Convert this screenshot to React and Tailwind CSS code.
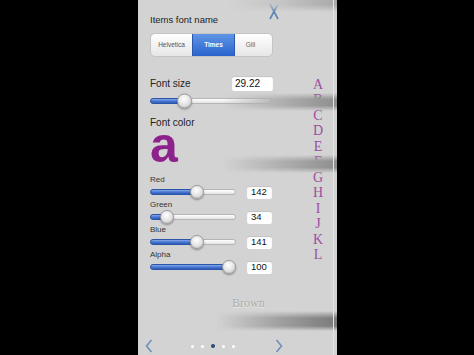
import React from 'react';

const SANS = "font-['Liberation_Sans',Arial,sans-serif]";

const colors = [
  { name: 'Red', value: 142 },
  { name: 'Green', value: 34 },
  { name: 'Blue', value: 141 },
  { name: 'Alpha', value: 100, max: 100 },
];

const letters = ['A', 'B', 'C', 'D', 'E', 'F', 'G', 'H', 'I', 'J', 'K', 'L'];

function Slider({ wide, frac }) {
  const width = wide ? 122 : 86;
  const r = wide ? 7.5 : 7;
  const center = r + frac * (width - 2 * r);
  return (
    <div className={`relative h-[16px] ${wide ? 'w-[122px]' : 'w-[86px]'}`}>
      <div className="absolute inset-x-0 top-[5px] h-[6px] rounded-full border border-[#b5b5b5] bg-linear-to-b from-[#ffffff] to-[#e4e4e4]" />
      <div
        className="absolute left-0 top-[5px] h-[6px] rounded-full border border-[#2a55a8] bg-linear-to-b from-[#86a9e8] via-[#4a78d2] to-[#2d5cb8]"
        style={{ width: center }}
      />
      <div
        className={`absolute top-1/2 -translate-y-1/2 rounded-full border border-[#9c9c9c] bg-[radial-gradient(circle_at_45%_35%,#ffffff,#e2e2e2_55%,#b4b4b4)] shadow-[0_1px_2px_rgba(0,0,0,0.35)] ${wide ? 'size-[15px]' : 'size-[14px]'}`}
        style={{ left: center - r }}
      />
    </div>
  );
}

function ValueBox({ children, wide }) {
  return (
    <div
      className={`flex items-center rounded-[2px] bg-white text-[#111] shadow-[inset_0_1px_1px_rgba(0,0,0,0.25)] ${
        wide ? 'h-[15px] w-[41px] pl-[3px] text-[10px]' : 'h-[13px] w-[25px] pl-[4px] text-[9.5px]'
      }`}
    >
      {children}
    </div>
  );
}

function Chevron({ right }) {
  return (
    <svg width="8" height="14" viewBox="0 0 8 14">
      <polyline
        points={right ? '1.5,1 6.5,7 1.5,13' : '6.5,1 1.5,7 6.5,13'}
        fill="none"
        stroke="#6f8fbb"
        strokeWidth="1.6"
      />
    </svg>
  );
}

export default function App() {
  return (
    <div className={`flex h-[355px] w-[474px] bg-black ${SANS}`}>
      <div className="w-[138px]" />
      <div className="relative flex h-[355px] w-[199px] flex-col overflow-hidden bg-[#d3d3d3]">
        <div className="flex h-[275px]">
          {/* settings column */}
          <div className="w-[172px] pl-[12px]">
            <div className="flex h-[33px] w-[130px] justify-between">
              <div className="flex items-end pb-[8px] text-[9.5px] leading-[11px] text-[#222]">Items font name</div>
              <svg width="12" height="18" viewBox="0 0 12 18" className="mt-[3px]">
                <line x1="2" y1="1" x2="10" y2="16" stroke="#5d84b6" strokeWidth="1.6" />
                <line x1="10" y1="1" x2="2" y2="16" stroke="#5d84b6" strokeWidth="1.6" />
              </svg>
            </div>

            {/* font name segments */}
            <div className="flex h-[24px] w-[123px] overflow-hidden rounded-[5px] border border-[#c4c4c4] bg-linear-to-b from-[#ffffff] to-[#e6e6e6] text-[6.5px]">
              <div className="flex w-[41px] items-center justify-center text-[#555]">Helvetica</div>
              <div className="flex w-[43px] items-center justify-center border-x border-[#2b58ad] bg-linear-to-b from-[#5f95e6] to-[#2a63cc] font-semibold text-white">
                Times
              </div>
              <div className="flex flex-1 items-center justify-center pr-[6px] text-[#666]">Gill</div>
            </div>

            <div className="mt-[19px] flex h-[15px] w-[123px] items-center justify-between">
              <div className="text-[10px] text-[#222]">Font size</div>
              <ValueBox wide>29.22</ValueBox>
            </div>
            <div className="mt-[2px]">
              <Slider wide frac={(29.22 - 10) / 75} />
            </div>

            <div className="mt-[8px] h-[11px] text-[10px] leading-[11px] text-[#222]">Font color</div>
            <div className="h-[34px] text-[50px] font-bold leading-[34px] text-[#8e228d]">a</div>

            <div className="mt-[13px] flex flex-col gap-[1px]">
              {colors.map((c) => (
                <div key={c.name} className="flex flex-col">
                  <div className="h-[9px] text-[8px] leading-[9px] text-[#333]">{c.name}</div>
                  <div className="mt-[1px] flex h-[14px] w-[122px] items-center justify-between">
                    <Slider frac={c.value / (c.max || 255)} />
                    <ValueBox>{c.value}</ValueBox>
                  </div>
                </div>
              ))}
            </div>
          </div>

          {/* letter picker */}
          <div className="flex w-[16px] flex-col items-center pt-[77px] font-['Liberation_Serif','Times_New_Roman',serif] text-[14px] leading-[15.45px] text-[#9c4ea2]">
            {letters.map((l) => (
              <div key={l}>{l}</div>
            ))}
          </div>
        </div>

        <div className="ml-[94px] mt-[21px] h-[14px] font-['Liberation_Serif','Times_New_Roman',serif] text-[12px] leading-[14px] text-[#acacac] [text-shadow:0_1px_0_#ececec]">
          Brown
        </div>

        <div className="mt-[29px] flex h-[14px] items-center pl-[7px]">
          <Chevron />
          <div className="ml-[38px] flex items-center gap-[7px]">
            <div className="size-[3px] rounded-full bg-white" />
            <div className="size-[3px] rounded-full bg-white" />
            <div className="size-[4px] rounded-full bg-[#2a4677]" />
            <div className="size-[3px] rounded-full bg-white" />
            <div className="size-[3px] rounded-full bg-white" />
          </div>
          <div className="ml-[40px]">
            <Chevron right />
          </div>
        </div>

        {/* picker shading bands */}
        <div className="pointer-events-none absolute left-[90px] right-0 top-0 h-[12px] bg-linear-to-r from-transparent via-[#c4c4c4] to-[#a9a9a9] [mask-image:linear-gradient(to_bottom,black_40%,transparent)]" />
        <div className="pointer-events-none absolute left-[85px] right-0 top-[93px] h-[18px] bg-linear-to-r from-transparent via-[#b0b0b0] to-[#8e8e8e] [mask-image:linear-gradient(to_bottom,transparent,black_35%,black_70%,transparent)]" />
        <div className="pointer-events-none absolute left-[85px] right-0 top-[155px] h-[18px] bg-linear-to-r from-transparent via-[#b0b0b0] to-[#8e8e8e] [mask-image:linear-gradient(to_bottom,transparent,black_35%,black_70%,transparent)]" />
        <div className="pointer-events-none absolute left-[78px] right-0 top-[311px] h-[20px] bg-linear-to-r from-transparent via-[#a2a2a2] to-[#7a7a7a] [mask-image:linear-gradient(to_bottom,transparent,black_35%,black_75%,transparent)]" />
        <div className="pointer-events-none absolute bottom-0 right-[3px] top-0 w-[1px] bg-[#e4e4e4]" />
      </div>
      <div className="flex-1" />
    </div>
  );
}
